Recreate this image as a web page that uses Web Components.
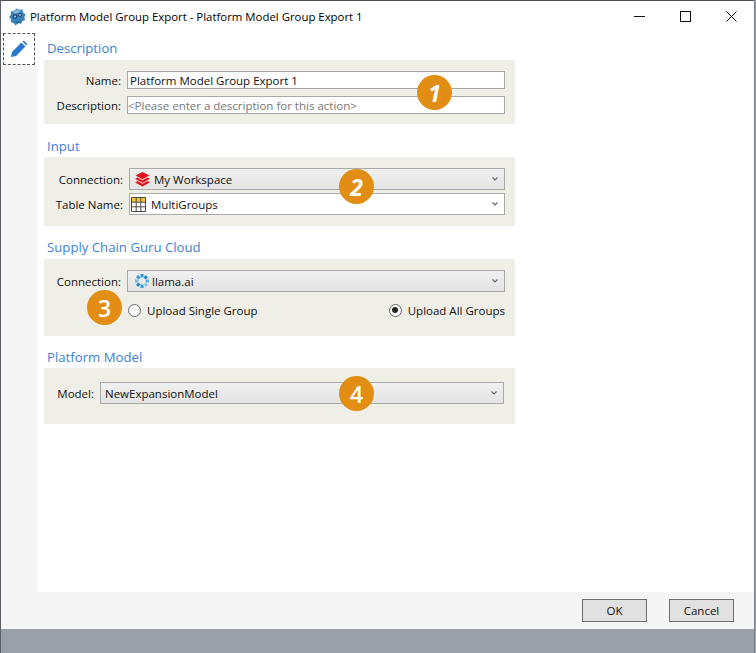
<!DOCTYPE html>
<html lang="en"><head><meta charset="utf-8"><title>Platform Model Group Export</title>
<style>
html,body{margin:0;padding:0;background:#9aa0aa;}
body{width:756px;height:653px;overflow:hidden;font:11.5px "Open Sans","Noto Sans",sans-serif;color:#111;}
</style></head><body>
<x-dialog>
  <x-titlebar slot="title">Platform Model Group Export - Platform Model Group Export 1</x-titlebar>
  <x-sidetab slot="side"></x-sidetab>
  <x-section heading="Description" pad="11px 10px 10px 0" gap="7" style="margin-top:6px">
    <x-field label="Name:" lw="77"><x-input value="Platform Model Group Export 1"></x-input></x-field>
    <x-field label="Description:" lw="77"><x-input placeholder="&lt;Please enter a description for this action&gt;"></x-input></x-field>
    <x-badge n="1" italic style="left:373px;top:15px"></x-badge>
  </x-section>
  <x-section heading="Input" pad="11px 10px 11px 0" gap="3" style="margin-top:11px;--hy:1px">
    <x-field label="Connection:" lw="79"><x-select icon="layers">My Workspace</x-select></x-field>
    <x-field label="Table Name:" lw="79"><x-select icon="table" white>MultiGroups</x-select></x-field>
    <x-badge n="2" italic style="left:295px;top:12px"></x-badge>
  </x-section>
  <x-section heading="Supply Chain Guru Cloud" pad="11px 10px 0 0" gap="6" style="margin-top:11px;--panel-h:77px">
    <x-field label="Connection:" lw="77"><x-select icon="spin">llama.ai</x-select></x-field>
    <x-field lw="77"><x-radios></x-radios></x-field>
    <x-badge n="3" style="left:43px;top:31px"></x-badge>
  </x-section>
  <x-section heading="Platform Model" pad="14px 11px 20px 0" gap="0" style="margin-top:10px;--hy:1px">
    <x-field label="Model:" lw="50"><x-select>NewExpansionModel</x-select></x-field>
    <x-badge n="4" style="left:295px;top:8px"></x-badge>
  </x-section>
  <x-btn slot="footer">OK</x-btn>
  <x-btn slot="footer">Cancel</x-btn>
</x-dialog>
<script>
function def(name, css, html, init){
  customElements.define(name, class extends HTMLElement{
    connectedCallback(){
      if(this.shadowRoot) return;
      const r=this.attachShadow({mode:"open"});
      r.innerHTML="<style>"+css+"</style>"+(typeof html==="function"?html(this):html);
      if(init) init(this,r);
    }
  });
}
const esc=s=>(s||"").replace(/&/g,"&amp;").replace(/</g,"&lt;").replace(/>/g,"&gt;");
const ICONS={
 layers:{ml:1,mr:4,svg:`<svg width="15" height="15" viewBox="0 0 15 15" style="display:block"><path d="M7.5 0 14.5 3.6 7.5 7.2 .5 3.6Z" fill="#e3141c"/><path d="M2.4 5.6 7.5 8.3 12.6 5.6 14.8 6.9 7.5 10.8 .2 6.9Z" fill="#e3141c"/><path d="M2.4 9.1 7.5 11.8 12.6 9.1 14.8 10.4 7.5 14.6 .2 10.4Z" fill="#e3141c"/></svg>`},
 table:{ml:-3,mr:5,svg:`<svg width="15" height="15" viewBox="0 0 15 15" style="display:block"><rect x="1" y="1" width="13" height="4" fill="#f5c431"/><path d="M.5.5h14v14H.5zM.5 5.2h14M.5 9.8h14M5.2.5v14M9.8.5v14" fill="none" stroke="#4a4a48" stroke-width="1"/></svg>`},
 spin:{ml:3,mr:3,svg:`<svg width="14" height="14" viewBox="0 0 14 14" fill="none" style="display:block"><g stroke-width="3" stroke-linecap="butt"><path d="M7 0v3.4" stroke="#2f9be0"/><path d="M11.9 2.1 9.5 4.5" stroke="#1f86d2"/><path d="M14 7h-3.4" stroke="#58b2e8"/><path d="M11.9 11.9 9.5 9.5" stroke="#8cc9ee"/><path d="M7 14v-3.4" stroke="#2f9be0"/><path d="M2.1 11.9 4.5 9.5" stroke="#1f86d2"/><path d="M0 7h3.4" stroke="#6dbcea"/><path d="M2.1 2.1 4.5 4.5" stroke="#2f9be0"/></g></svg>`}
};
def("x-dialog",`
 :host{display:grid;grid-template-columns:36px 1fr;grid-template-rows:32px 560px 37px 24px;width:755px;height:653px;box-sizing:border-box;border-left:1px solid #5a5f66;border-right:1px solid #7d828a;}
 .t{grid-column:1/3;background:#fff;border-top:1px solid #4a4f55;}
 .s{background:#f5f5f5;}
 .m{background:#fff;padding-left:7px;position:relative;}
 .f{grid-column:1/3;background:#f5f5f5;display:flex;justify-content:flex-end;align-items:flex-start;gap:22px;padding:7px 20px 0 0;box-sizing:border-box;}
 .g{grid-column:1/3;background:#9aa0aa;}
`,`<div class="t"><slot name="title"></slot></div><div class="s"><slot name="side"></slot></div><div class="m"><slot></slot></div><div class="f"><slot name="footer"></slot></div><div class="g"></div>`);
def("x-titlebar",`
 :host{display:flex;align-items:center;height:31px;color:#000;font-size:11.4px;padding-left:8px;position:relative;}
 .ic{margin-right:4px;display:block}
 .b{display:flex;margin-left:auto;height:30px}
 .b span{width:46px;display:flex;align-items:center;justify-content:center}
 .txt{white-space:nowrap}
`,()=>`<svg class="ic" width="17" height="18" viewBox="0 0 17 18"><path d="M8 .4 10.4 1.8 13.4 1.6 14 4.4 16.6 6.4 15.4 9 16 12 13.4 13 12 15.8 9 15.2 6.6 17.4 4.6 15 1.8 14.2 2 11.2 .2 8.8 2 6.4 1.8 3.4 4.8 2.8Z" fill="#3a83bb"/><path d="M4 3.6 8 1.8 12 2.8 9 5 5 5.6Z" fill="#86bbdc"/><circle cx="6" cy="8.4" r="2.4" fill="#1d4a72"/><circle cx="6" cy="8.4" r="1" fill="#b4d9ee"/><circle cx="11" cy="7" r="2" fill="#1d4a72"/><circle cx="11" cy="7" r=".9" fill="#b4d9ee"/><path d="M5 12.8 8 14.2 12 12.2 11 14 8 15.6Z" fill="#245d8a"/></svg><span class="txt"><slot></slot></span><div class="b">
 <span><svg width="11" height="11" viewBox="0 0 11 11"><path d="M0 5.5h11" stroke="#111" fill="none"/></svg></span>
 <span><svg width="11" height="11" viewBox="0 0 11 11"><rect x=".5" y=".5" width="10" height="10" fill="none" stroke="#111"/></svg></span>
 <span><svg width="11" height="11" viewBox="0 0 11 11"><path d="M.5.5l10 10M10.5.5l-10 10" fill="none" stroke="#111"/></svg></span></div>`);
def("x-sidetab",`
 :host{display:block;background:#fff;height:33px;padding:1px 2px 0;box-sizing:border-box}
 div{display:flex;align-items:center;justify-content:center;width:32px;height:32px;box-sizing:border-box;background:#fff;border:1px dashed #555;}
`,`<div><svg width="18" height="18" viewBox="0 0 18 18"><path d="M1 17 2 12 11.400 2.600 15.400 6.600 6 16Z" fill="#2577cf"/><path d="M12.600 1.600 13.800.6 17.400 4.200 16.400 5.400Z" fill="#2577cf"/></svg></div>`);
def("x-section",`
 :host{display:block;width:471px;}
 h2{margin:0;height:22px;box-sizing:border-box;padding:var(--hy,0) 0 0 3px;font:400 13.2px/20px "Open Sans","Noto Sans",sans-serif;color:#3f7fd6;white-space:nowrap}
 .p{position:relative;background:#efefe7;display:flex;flex-direction:column;box-sizing:border-box;height:var(--panel-h,auto)}
`,h=>`<h2>${esc(h.getAttribute("heading"))}</h2><div class="p" style="padding:${h.getAttribute("pad")};gap:${h.getAttribute("gap")}px"><slot></slot></div>`);
def("x-field",`
 :host{display:flex;align-items:center;gap:6px;}
 label{flex:none;text-align:right;white-space:nowrap}
 .c{flex:1;min-width:0}
`,h=>`<label style="width:${h.getAttribute("lw")}px">${esc(h.getAttribute("label"))}</label><div class="c"><slot></slot></div>`);
def("x-input",`
 :host{display:flex;align-items:center;height:18px;box-sizing:border-box;background:#fff;border:1px solid #a9a9a9;padding-left:2px;white-space:nowrap;overflow:hidden}
 .ph{color:#777;margin-left:-2px}
`,h=>h.getAttribute("value")?`<span>${esc(h.getAttribute("value"))}</span>`:`<span class="ph">${esc(h.getAttribute("placeholder"))}</span>`);
def("x-select",`
 :host{display:flex;align-items:center;height:22px;box-sizing:border-box;border:1px solid #a9a9a9;background:linear-gradient(#f0f0f0,#e4e4e4);padding-left:4px;white-space:nowrap;position:relative}
 :host([white]){background:#fff}
 .i{display:flex}
 .a{margin-left:auto;width:18px;height:100%;display:flex;align-items:center;justify-content:center}
`,h=>{const i=ICONS[h.getAttribute("icon")];return (i?`<span class="i" style="margin:0 ${i.mr}px 0 ${i.ml}px">${i.svg}</span>`:"")+`<span><slot></slot></span><span class="a"><svg width="6" height="4" viewBox="0 0 6 4"><path d="M.5.5 3 3 5.500.5" fill="none" stroke="#666" stroke-width="1.1"/></svg></span>`});
def("x-radios",`
 :host{display:flex;justify-content:space-between;align-items:center;height:24px;padding-left:1px}
 span.r{display:flex;align-items:center;gap:6px}
 i{display:block;width:11px;height:11px;border:1px solid #666;border-radius:50%;background:#fff;position:relative;flex:none}
 i.on::after{content:"";position:absolute;left:2.5px;top:2.5px;width:6px;height:6px;border-radius:50%;background:#222}
`,`<span class="r"><i></i>Upload Single Group</span><span class="r"><i class="on"></i>Upload All Groups</span>`);
def("x-badge",`
 :host{position:absolute;display:flex;align-items:center;justify-content:center;width:35px;height:35px;border-radius:50%;background:#e28e14;color:#fff;font:600 23px "Open Sans",sans-serif;}
 :host([italic]){font-style:italic;font-weight:700}
`,h=>esc(h.getAttribute("n")));
def("x-btn",`
 :host{display:flex;align-items:center;justify-content:center;width:65px;height:23px;box-sizing:border-box;background:#e1e1e1;border:1px solid #6e6e6e;}
`,`<slot></slot>`);
</script>
</body></html>
